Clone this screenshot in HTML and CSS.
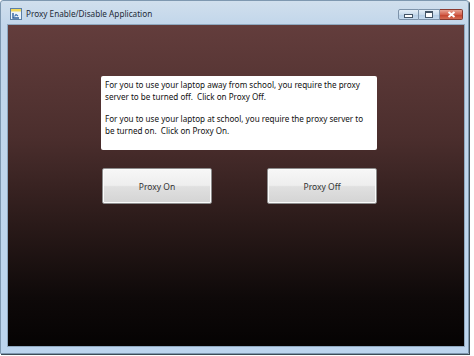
FILE: index.html
```html
<!DOCTYPE html>
<html>
<head>
<meta charset="utf-8">
<link rel="stylesheet" href="styles.css">
</head>
<body>
<div class="window">
  <div class="titlebar">
    <svg class="app-icon" width="12" height="12" viewBox="0 0 12 12">
      <rect x="0.5" y="0.5" width="11" height="11" fill="#eef4fa" stroke="#5b7fa6"/>
      <rect x="1" y="1" width="10" height="2.5" fill="#f2d85a"/>
      <path d="M3 5 L3 10 L9 10" fill="none" stroke="#2f5f9a" stroke-width="1.4"/>
      <path d="M4.5 8.5 L6 6.5 L8 8" fill="none" stroke="#3b6fb0" stroke-width="1.2"/>
    </svg>
    <span class="title">Proxy Enable/Disable Application</span>
    <div class="caption-buttons">
      <div class="cap cap-min"><span class="glyph-min"></span></div>
      <div class="cap cap-max"><span class="glyph-max"></span></div>
      <div class="cap cap-close">
        <svg width="9" height="7" viewBox="0 0 9 7"><path d="M1.5 1 L7.5 6 M7.5 1 L1.5 6" stroke="#fff" stroke-width="2"/></svg>
      </div>
    </div>
  </div>
  <div class="client">
    <div class="panel">
      <div class="message">
        <p>For you to use your laptop away from school, you require the proxy server to be turned off.&nbsp; Click on Proxy Off.</p>
        <p>For you to use your laptop at school, you require the proxy server to be turned on.&nbsp; Click on Proxy On.</p>
      </div>
      <div class="buttons">
        <button class="btn">Proxy On</button>
        <button class="btn">Proxy Off</button>
      </div>
    </div>
  </div>
</div>
</body>
</html>
```
FILE: styles.css
```css
html, body {
  margin: 0;
  padding: 0;
  background: #ffffff;
}
body {
  width: 474px;
  height: 356px;
  overflow: hidden;
  font-family: "Noto Sans", "Open Sans", sans-serif;
}
.window {
  box-sizing: border-box;
  width: 469px;
  height: 354px;
  padding: 0 3px 6px 6px;
  background: linear-gradient(to bottom, #d0dfed 0px, #c2d6ea 24px, #bcd5ee 100%);
  border: 1px solid #7e98b0;
  border-radius: 3px 3px 0 0;
  box-shadow: 1px 1px 0 #3d4c57;
  display: flex;
  flex-direction: column;
}
.titlebar {
  height: 23px;
  display: flex;
  align-items: center;
  padding-top: 1px;
  box-sizing: border-box;
}
.app-icon {
  margin: 1px 4px 0 3px;
  flex: none;
}
.title {
  font-size: 8.2px;
  color: #1e2a36;
  flex: 1;
  margin-top: 1px;
}
.caption-buttons {
  display: flex;
  align-self: flex-start;
  margin-top: 7px;
  margin-right: 2px;
}
.cap {
  height: 11px;
  box-sizing: border-box;
  border: 1px solid #7d93aa;
  display: flex;
  align-items: center;
  justify-content: center;
  background: linear-gradient(to bottom, #e4eef7 0%, #c8dbec 50%, #b2cbe3 51%, #c5daee 100%);
}
.cap-min { width: 21px; border-radius: 2px 0 0 2px; }
.cap-max { width: 21px; border-left: none; }
.cap-close {
  width: 23px;
  border-left: none;
  border-color: #8a3a30;
  border-radius: 0 2px 2px 0;
  background: linear-gradient(to bottom, #e8a393 0%, #d4614e 50%, #c2402c 51%, #d46a52 100%);
}
.glyph-min {
  width: 7px;
  height: 2px;
  margin-top: 3px;
  background: #fff;
  border: 1px solid #445566;
}
.glyph-max {
  width: 6px;
  height: 4px;
  border: 1px solid #445566;
  border-top-width: 2px;
  background: #fff;
}
.client {
  flex: 1;
  background: linear-gradient(to bottom, #633d3c 0%, #4b2e2d 35%, #2a1a19 62%, #0e0909 85%, #050303 100%);
  border: 1px solid #8fa8bf;
  display: flex;
  justify-content: flex-start;
}
.panel {
  margin: 51px 0 0 93px;
  width: 276px;
  display: flex;
  flex-direction: column;
  gap: 18px;
}
.message {
  background: #ffffff;
  border-radius: 2px;
  height: 74px;
  box-sizing: border-box;
  padding: 3px 4px;
  font-size: 8.1px;
  line-height: 12px;
  color: #111;
}
.message p {
  margin: 0 0 10px 0;
}
.buttons {
  display: flex;
  justify-content: space-between;
  padding-left: 1px;
}
.btn {
  width: 110px;
  height: 36px;
  font-family: "Noto Sans", "Open Sans", sans-serif;
  font-size: 8.5px;
  color: #333;
  border: 1px solid #8d8d8d;
  border-radius: 2px;
  background: linear-gradient(to bottom, #f7f7f7 0%, #eeeeee 48%, #e0e0e0 52%, #d4d4d4 100%);
  box-shadow: inset 0 0 0 1px #fbfbfb;
  padding: 0;
}
```
